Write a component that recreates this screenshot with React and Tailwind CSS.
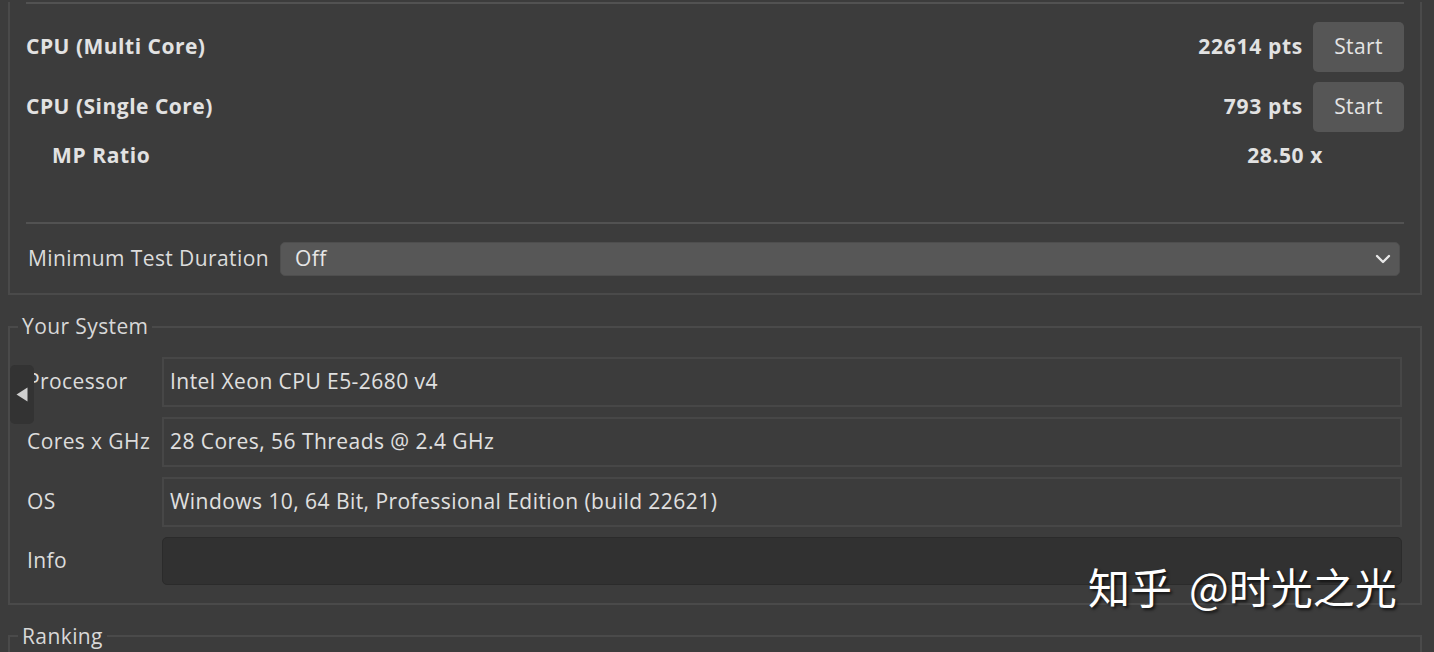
import React from "react";

const font = { fontFamily: '"Open Sans", "Noto Sans", sans-serif' };

const ScoreRow = ({ label, score }) => (
  <div className="flex items-center h-[50px]">
    <div className="flex-1 text-[21px] font-bold tracking-[0.5px] text-[#e2e2e2]">{label}</div>
    <div className="text-[21px] font-bold tracking-[0.7px] text-[#e2e2e2] mr-[10px]">{score}</div>
    <button className="w-[91px] h-[50px] rounded-[5px] bg-[#565656] text-[21px] tracking-[0.4px] text-[#e4e4e4]">
      Start
    </button>
  </div>
);

const InfoRow = ({ label, value }) => (
  <>
    <div className="flex items-center text-[21px] tracking-[0.4px] text-[#dcdcdc]">{label}</div>
    <div className="h-[50px] flex items-center px-[6px] border-2 border-[#474747] text-[21px] tracking-[0.45px] text-[#e0e0e0]">
      {value}
    </div>
  </>
);

export default function App() {
  return (
    <div
      style={font}
      className="relative h-[652px] overflow-hidden bg-[#3c3c3c] pl-[8px] pr-[12px]"
    >
      {/* Benchmark section */}
      <div className="border-x-2 border-b-2 border-[#4a4a4a] pl-[16px] pr-[16px]">
        <div className="mt-[2px] h-[2px] bg-[#525252]" />
        <div className="mt-[18px]">
          <ScoreRow label="CPU (Multi Core)" score="22614 pts" />
        </div>
        <div className="mt-[10px]">
          <ScoreRow label="CPU (Single Core)" score="793 pts" />
        </div>
        <div className="mt-[9px] flex items-center h-[30px] text-[21px] font-bold tracking-[0.6px] text-[#e2e2e2]">
          <div className="flex-1 pl-[26px]">MP Ratio</div>
          <div className="mr-[81px]">28.50 x</div>
        </div>
        <div className="mt-[51px] h-[2px] bg-[#525252]" />
        <div className="mt-[18px] mb-[17px] flex items-center gap-[11px] pl-[2px] pr-[4px]">
          <div className="text-[21px] tracking-[0.4px] text-[#dcdcdc] whitespace-nowrap">Minimum Test Duration</div>
          <div className="flex-1 h-[34px] rounded-[5px] bg-[#575757] border border-[#4e4e4e] flex items-center pl-[14px] pr-[8px] text-[21px] tracking-[0.4px] text-[#e6e6e6]">
            <span className="flex-1">Off</span>
            <svg width="16" height="10" viewBox="0 0 16 10" fill="none">
              <path d="M2 2l6 6 6-6" stroke="#e8e8e8" strokeWidth="2.4" strokeLinecap="round" strokeLinejoin="round" />
            </svg>
          </div>
        </div>
      </div>

      {/* Your System */}
      <fieldset className="mt-[16px] border-2 border-[#4a4a4a] pl-[17px] pr-[18px] pt-[14px] pb-[18px]">
        <legend className="ml-[-9px] px-[4px] text-[21px] tracking-[0.4px] text-[#d8d8d8]">Your System</legend>
        <div className="grid grid-cols-[135px_1fr] gap-y-[10px]">
          <InfoRow label="Processor" value="Intel Xeon CPU E5-2680 v4" />
          <InfoRow label="Cores x GHz" value="28 Cores, 56 Threads @ 2.4 GHz" />
          <InfoRow label="OS" value="Windows 10, 64 Bit, Professional Edition (build 22621)" />
          <div className="flex items-center text-[21px] tracking-[0.4px] text-[#dcdcdc]">Info</div>
          <div className="h-[48px] rounded-[5px] bg-[#313131] border border-[#2b2b2b]" />
        </div>
      </fieldset>

      {/* Ranking */}
      <fieldset className="mt-[16px] h-[200px] border-2 border-[#4a4a4a] pl-[17px]">
        <legend className="ml-[-9px] px-[4px] text-[21px] tracking-[0.4px] text-[#d8d8d8]">Ranking</legend>
      </fieldset>

      {/* collapse tab */}
      <div className="absolute left-[10px] top-[365px] w-[24px] h-[59px] rounded-[5px] bg-[#333333] flex items-center justify-center">
        <svg width="12" height="15" viewBox="0 0 12 15">
          <path d="M11.5 0.5v14L0.5 7.5z" fill="#cfcfcf" />
        </svg>
      </div>

      {/* watermark */}
      <div
        className="absolute left-[1088px] top-[561px] flex gap-[17px] text-[42px] leading-[50px] text-white [text-shadow:2px_2px_3px_rgba(0,0,0,0.7)]"
        style={{ fontFamily: '"Noto Sans CJK SC", sans-serif' }}
      >
        <span>知乎</span>
        <span>@时光之光</span>
      </div>
    </div>
  );
}
